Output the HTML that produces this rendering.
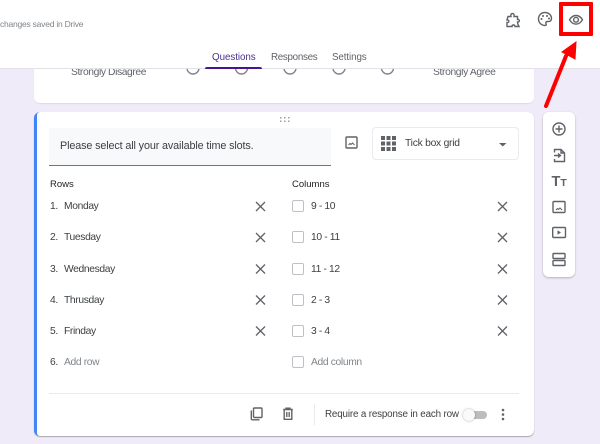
<!DOCTYPE html>
<html><head><meta charset="utf-8">
<style>
html,body{margin:0;padding:0}
body{width:600px;height:444px;overflow:hidden;position:relative;background:#f0ebf8;font-family:"Liberation Sans",sans-serif;color:#3c4043}
#w{position:absolute;left:0;top:0;width:600px;height:444px;filter:blur(.3px)}
.t{position:absolute;white-space:nowrap;font-size:10.300px;line-height:14px;letter-spacing:-.36px}
.a{position:absolute}
.cb{position:absolute;left:292px;width:10px;height:10px;border:1.300px solid #bdc1c6;border-radius:2px;background:#fff}
svg{position:absolute;overflow:visible}
.ic{fill:none;stroke:#5f6368;stroke-width:1.400}
</style></head><body><div id="w">
<!-- top card -->
<div class="a" style="left:34px;top:50px;width:500px;height:53px;background:#fff;border-radius:6px;box-shadow:0 1px 1px rgba(0,0,0,.08)"></div>
<div class="t" style="left:71px;top:66px;color:#5f6368;letter-spacing:-.4px">Strongly Disagree</div>
<div class="t" style="left:433px;top:66px;color:#5f6368">Strongly Agree</div>
<svg style="left:0;top:0" width="600" height="100" class="ic">
<circle cx="193" cy="68" r="6" style="stroke:#80868b"/><circle cx="241.500" cy="68" r="6" style="stroke:#80868b"/><circle cx="290" cy="68" r="6" style="stroke:#80868b"/><circle cx="339" cy="68" r="6" style="stroke:#80868b"/><circle cx="387.500" cy="68" r="6" style="stroke:#80868b"/>
</svg>
<!-- header -->
<div class="a" style="left:0;top:0;width:600px;height:69px;background:#fff;border-bottom:1px solid #e3e1e8;box-sizing:border-box"></div>
<div class="t" style="left:0;top:17px;font-size:8.500px;color:#80868b;letter-spacing:-.23px">changes saved in Drive</div>
<div class="t" style="left:212px;top:51px;color:#4d2f8f;font-size:9.800px;letter-spacing:-.05px">Questions</div>
<div class="t" style="left:271px;top:51px;color:#5f6368;font-size:9.800px;letter-spacing:-.3px">Responses</div>
<div class="t" style="left:332px;top:51px;color:#5f6368;font-size:9.800px;letter-spacing:-.1px">Settings</div>
<div class="a" style="left:205px;top:67px;width:57px;height:2px;background:#4a148c;border-radius:2px 2px 0 0"></div>
<!-- header icons -->
<svg style="left:505px;top:12px" width="16" height="16" viewBox="0 0 16 16" class="ic"><path d="M3 4.500H6C5.500 2 6.500 1.500 7.500 1.500S9.500 2.500 9 4.500H12.500V7.500C15 7 15 10.500 12.500 10C12.500 11.500 13 13 14 14.500H10C10 12.500 7 12.500 7 14.500H2V10.500C4.500 11 4.500 7.500 2 8Z"/></svg>
<svg style="left:537px;top:11px" width="16" height="16" viewBox="0 0 16 16" class="ic"><path d="M8 1.500C4.200 1.500 1.500 4.300 1.500 8S4.500 14.500 8 14.500C9.500 14.500 9.500 13.200 9 12.500C8.500 11.500 9 10.500 10.200 10.500H12C13.500 10.500 14.500 9 14.500 7.500C14.500 4 11.500 1.500 8 1.500Z"/><g style="fill:#5f6368;stroke:none"><circle cx="4.500" cy="8" r="1"/><circle cx="6" cy="5" r="1"/><circle cx="10" cy="5" r="1"/><circle cx="12" cy="7.500" r="1"/></g></svg>
<svg style="left:568px;top:13px" width="16" height="14" viewBox="0 0 16 14" class="ic"><path d="M1.500 6.800C3.300 3.800 5.400 2.500 8 2.500S12.700 3.800 14.500 6.800C12.700 9.800 10.600 11.100 8 11.100S3.300 9.800 1.500 6.800Z"/><circle cx="8" cy="6.800" r="2.400"/></svg>
<!-- red annotation -->
<div class="a" style="left:559px;top:2px;width:26px;height:26px;border:4px solid #f00;border-radius:1px"></div>
<svg style="left:0;top:0" width="600" height="120"><path d="M546 106L566 56" stroke="#f00" stroke-width="4" stroke-linecap="round" fill="none"/><path d="M576 42L562 52L575 59Z" fill="#f00" stroke="#f00" stroke-width="1"/></svg>
<!-- question card -->
<div class="a" style="left:34px;top:112px;width:500px;height:324px;background:#4285f4;border-radius:6px;box-shadow:0 1px 1px rgba(0,0,0,.3)"></div>
<div class="a" style="left:37px;top:112px;width:497px;height:324px;background:#fff;border-radius:3px 6px 6px 3px"></div>
<svg style="left:280px;top:117px" width="10" height="6"><g fill="#9aa0a6"><rect x="0" y="0" width="1.500" height="1.500"/><rect x="4" y="0" width="1.500" height="1.500"/><rect x="8" y="0" width="1.500" height="1.500"/><rect x="0" y="3.500" width="1.500" height="1.500"/><rect x="4" y="3.500" width="1.500" height="1.500"/><rect x="8" y="3.500" width="1.500" height="1.500"/></g></svg>
<div class="a" style="left:49px;top:128px;width:282px;height:37px;background:#f8f9fa;border-bottom:1px solid #70757a"></div>
<div class="t" style="left:60px;top:139px;font-size:10.800px;color:#3c4043;letter-spacing:-.13px">Please select all your available time slots.</div>
<svg style="left:345px;top:136px" width="13" height="13" viewBox="0 0 13 13" class="ic"><rect x="1" y="1" width="11" height="11" rx="1"/><path d="M3.500 9L5 7.500L6 8.500L7.500 7L9.500 9" style="stroke-width:1"/></svg>
<div class="a" style="left:372px;top:127px;width:147px;height:33px;border:1px solid #e8eaed;border-radius:4px;box-sizing:border-box"></div>
<svg style="left:381px;top:136px" width="15" height="15" fill="#5f6368"><rect x="0" y="0" width="4" height="4"/><rect x="5.500" y="0" width="4" height="4"/><rect x="11" y="0" width="4" height="4"/><rect x="0" y="5.500" width="4" height="4"/><rect x="5.500" y="5.500" width="4" height="4"/><rect x="11" y="5.500" width="4" height="4"/><rect x="0" y="11" width="4" height="4"/><rect x="5.500" y="11" width="4" height="4"/><rect x="11" y="11" width="4" height="4"/></svg>
<div class="t" style="left:405px;top:137px;color:#3c4043;letter-spacing:-.25px">Tick box grid</div>
<svg style="left:499px;top:142.500px" width="8" height="4"><path d="M0 0H7.500L3.750 3.500Z" fill="#5f6368"/></svg>
<div class="t" style="left:50px;top:178px;color:#202124;font-size:9.500px;letter-spacing:0">Rows</div>
<div class="t" style="left:292px;top:178px;color:#202124;font-size:9.500px;letter-spacing:0">Columns</div>

<div class="t" style="left:50px;top:200px">1.</div><div class="t" style="left:64px;top:200px">Monday</div>
<div class="t" style="left:50px;top:231px">2.</div><div class="t" style="left:64px;top:231px">Tuesday</div>
<div class="t" style="left:50px;top:263px">3.</div><div class="t" style="left:64px;top:263px">Wednesday</div>
<div class="t" style="left:50px;top:294px">4.</div><div class="t" style="left:64px;top:294px">Thrusday</div>
<div class="t" style="left:50px;top:325px">5.</div><div class="t" style="left:64px;top:325px">Frinday</div>
<div class="t" style="left:50px;top:356px">6.</div><div class="t" style="left:64px;top:356px;color:#80868b">Add row</div>

<div class="cb" style="top:200px"></div><div class="t" style="left:311px;top:200px">9 - 10</div>
<div class="cb" style="top:231px"></div><div class="t" style="left:311px;top:231px">10 - 11</div>
<div class="cb" style="top:263px"></div><div class="t" style="left:311px;top:263px">11 - 12</div>
<div class="cb" style="top:294px"></div><div class="t" style="left:311px;top:294px">2 - 3</div>
<div class="cb" style="top:325px"></div><div class="t" style="left:311px;top:325px">3 - 4</div>
<div class="cb" style="top:356px"></div><div class="t" style="left:311px;top:356px;color:#80868b">Add column</div>

<svg style="left:0;top:0" width="600" height="444"><g stroke="#5f6368" stroke-width="1.300" fill="none">
<path d="M256 202L265 211M265 202L256 211"/><path d="M256 233L265 242M265 233L256 242"/><path d="M256 264.500L265 273.500M265 264.500L256 273.500"/><path d="M256 295.500L265 304.500M265 295.500L256 304.500"/><path d="M256 326.500L265 335.500M265 326.500L256 335.500"/>
<path d="M498 202L507 211M507 202L498 211"/><path d="M498 233L507 242M507 233L498 242"/><path d="M498 264.500L507 273.500M507 264.500L498 273.500"/><path d="M498 295.500L507 304.500M507 295.500L498 304.500"/><path d="M498 326.500L507 335.500M507 326.500L498 335.500"/>
</g></svg>
<!-- footer -->
<div class="a" style="left:49px;top:393px;width:470px;height:1px;background:#e8eaed"></div>
<svg style="left:250px;top:407px" width="14" height="15" viewBox="0 0 14 15" class="ic"><rect x="3.500" y="1" width="8.500" height="9.500" rx="1"/><path d="M1.300 3.500V11.800A1 1 0 0 0 2.300 12.800H9.500"/></svg>
<svg style="left:282px;top:407px" width="12" height="14" viewBox="0 0 12 14" class="ic"><path d="M1.200 2.500H10.800M4 2.500V1.200H8V2.500M2.200 2.500V12.300H9.800V2.500M4.800 5V10M7.200 5V10"/></svg>
<div class="a" style="left:314px;top:404px;width:1px;height:21px;background:#e8eaed"></div>
<div class="t" style="left:325px;top:408px;color:#3c4043;font-size:9.800px;letter-spacing:-.15px">Require a response in each row</div>
<div class="a" style="left:464px;top:411px;width:23px;height:8px;background:#bdbdbd;border-radius:4px"></div>
<div class="a" style="left:463px;top:409px;width:12px;height:12px;background:#fafafa;border-radius:50%;box-shadow:0 0 2px rgba(0,0,0,.35)"></div>
<svg style="left:501px;top:408px" width="4" height="13" fill="#5f6368"><circle cx="2" cy="2" r="1.300"/><circle cx="2" cy="6.500" r="1.300"/><circle cx="2" cy="11" r="1.300"/></svg>
<!-- sidebar -->
<div class="a" style="left:543px;top:112px;width:32px;height:165px;background:#fff;border-radius:6px;box-shadow:0 1px 2px rgba(0,0,0,.25)"></div>
<svg style="left:552px;top:122px" width="14" height="14" viewBox="0 0 14 14" class="ic"><circle cx="7" cy="7" r="6"/><path d="M7 3.500V10.500M3.500 7H10.500"/></svg>
<svg style="left:553px;top:148px" width="13" height="15" viewBox="0 0 13 15" class="ic"><path d="M1.500 4.500V1.500H8L11.500 5V13.500H1.500V11M1 7.500H7M5 5.500L7.500 7.500L5 9.500M8 1.500V5H11.500"/></svg>
<div class="t" style="left:551.500px;top:174px;font-size:14.500px;line-height:16px;font-weight:bold;color:#5f6368;letter-spacing:0">T<span style="font-size:10.500px">T</span></div>
<svg style="left:552px;top:200px" width="14" height="14" viewBox="0 0 14 14" class="ic"><rect x="1" y="1.500" width="12" height="11" rx="1"/><path d="M4 10L5.500 8.500L6.500 9.500L8 8L10 10" style="stroke-width:1"/></svg>
<svg style="left:552px;top:226px" width="14" height="13" viewBox="0 0 14 13" class="ic"><rect x="0.700" y="1.500" width="12.800" height="10" rx="1"/><path d="M5.500 4.200L9 6.500L5.500 8.800Z" style="fill:#5f6368;stroke:none"/></svg>
<svg style="left:552px;top:252px" width="14" height="15" viewBox="0 0 14 15" class="ic"><rect x="1" y="1.500" width="12" height="5" rx=".8"/><rect x="1" y="8.500" width="12" height="5" rx=".8"/></svg>
</div></body></html>
